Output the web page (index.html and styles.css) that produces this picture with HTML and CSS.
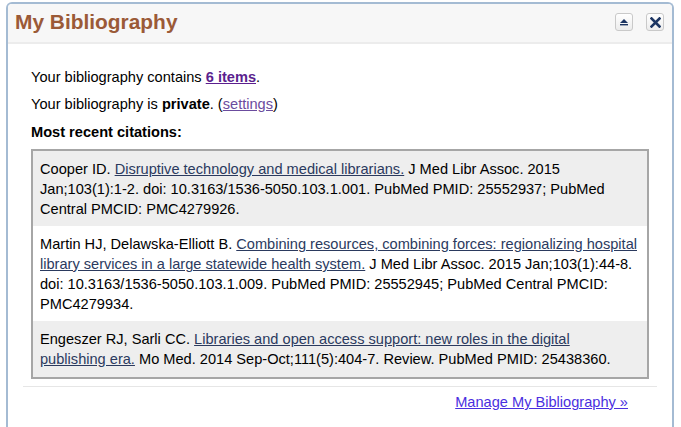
FILE: index.html
```html
<!DOCTYPE html>
<html lang="en">
<head>
    <meta charset="UTF-8">
    <title>My Bibliography</title>
    <link rel="stylesheet" href="styles.css">
</head>
<body>
    <div class="panel">
        <div class="panel-header">
            <h2>My Bibliography</h2>
            <div class="tools">
                <button type="button" class="tool-btn" title="Collapse">
                    <svg width="10" height="8" viewBox="0 0 10 8"><polygon points="1,5 9,5 5,1" fill="#1c3562"/><rect x="1" y="6" width="8" height="1.4" fill="#1c3562"/></svg>
                </button>
                <button type="button" class="tool-btn" title="Close">
                    <svg width="11" height="11" viewBox="0 0 11 11"><path d="M1.5 1.5 L9.5 9.5 M9.5 1.5 L1.5 9.5" stroke="#1c3562" stroke-width="2.6" stroke-linecap="square"/></svg>
                </button>
            </div>
        </div>

        <div class="panel-body">
            <div class="content">
                <p>Your bibliography contains <a href="#" class="count">6 items</a>.</p>
                <p>Your bibliography is <b>private</b>. (<a href="#" class="settings">settings</a>)</p>
                <p><b>Most recent citations:</b></p>

                <ul class="citations">
                    <li>Cooper ID. <a href="#">Disruptive technology and medical librarians.</a> J Med Libr Assoc. 2015 Jan;103(1):1-2. doi: 10.3163/1536-5050.103.1.001. PubMed PMID: 25552937; PubMed Central PMCID: PMC4279926.</li>
                    <li>Martin HJ, Delawska-Elliott B. <a href="#">Combining resources, combining forces: regionalizing hospital library services in a large statewide health system.</a> J Med Libr Assoc. 2015 Jan;103(1):44-8. doi: 10.3163/1536-5050.103.1.009. PubMed PMID: 25552945; PubMed Central PMCID: PMC4279934.</li>
                    <li>Engeszer RJ, Sarli CC. <a href="#">Libraries and open access support: new roles in the digital publishing era.</a> Mo Med. 2014 Sep-Oct;111(5):404-7. Review. PubMed PMID: 25438360.</li>
                </ul>
            </div>

            <div class="panel-footer">
                <a href="#" class="manage">Manage My Bibliography &raquo;</a>
            </div>
        </div>
    </div>
</body>
</html>
```

FILE: styles.css
```css
* {
    margin: 0;
    padding: 0;
    box-sizing: border-box;
}

body {
    font-family: "Liberation Sans", Arial, Helvetica, sans-serif;
    font-size: 14.6px;
    line-height: 18px;
    color: #000;
    background: #fff;
    padding: 2px 0 0 6px;
}

.panel {
    width: 668px;
    height: 430px;
    border: 2px solid #a4bbd3;
    border-bottom: none;
    border-radius: 6px 6px 0 0;
}

.panel-header {
    height: 40px;
    background: #f7f7f7;
    border-bottom: 2px solid #ececec;
    border-radius: 4px 4px 0 0;
    display: flex;
    align-items: center;
    justify-content: space-between;
    padding: 0 8px 0 7px;
}

h2 {
    font-size: 20.9px;
    font-weight: bold;
    color: #9b5a37;
    line-height: 24px;
    margin-top: -2px;
}

.tools {
    display: flex;
    gap: 13px;
    margin-top: -2px;
}

.tool-btn {
    width: 18px;
    height: 18px;
    border: 1px solid #c9c9c9;
    border-radius: 3px;
    background: linear-gradient(#ffffff, #ececec);
    display: flex;
    align-items: center;
    justify-content: center;
    cursor: pointer;
}

.panel-body {
    padding: 24px 15px 0;
}

.content {
    padding: 0 8px;
}

.content p {
    margin-bottom: 9px;
}

.content p + p + p {
    margin-top: 10px;
    margin-bottom: 8px;
}

a {
    color: #2b3a5e;
}

a.count {
    color: #5b1f8e;
    font-weight: bold;
}

a.settings {
    color: #6b4c9e;
}

.citations {
    list-style: none;
    border: 2px solid #a6a6a6;
    line-height: 20px;
}

.citations li {
    padding: 8px 10px 7px 7px;
}

.citations li:nth-child(odd) {
    background: #eeeeee;
}

.citations li:last-child {
    padding-bottom: 8px;
}

.panel-footer {
    margin-top: 7px;
    border-top: 1px solid #e6e6e6;
    padding: 6px 29px 0 0;
    text-align: right;
}

a.manage {
    color: #4a2fe0;
}
```
